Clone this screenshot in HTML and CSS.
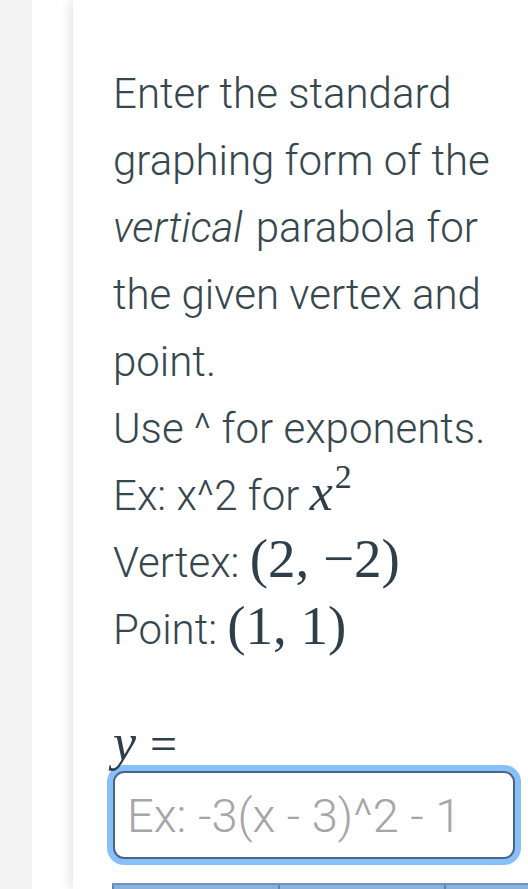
FILE: index.html
```html
<!DOCTYPE html>
<html lang="en">
<head>
<meta charset="utf-8">
<title>Parabola question</title>
<link rel="stylesheet" href="styles.css">
</head>
<body>
<div class="sheet">
  <div class="card">
    <div class="question">
      <p class="prompt">Enter the standard graphing form of the <em>vertical</em> parabola for the given vertex and point.</p>
      <p class="line">Use ^ for exponents.</p>
      <p class="line">Ex: x^2 for <span class="math"><i>x</i><sup>2</sup></span></p>
      <p class="line">Vertex: <span class="math big">(2, −2)</span></p>
      <p class="line">Point: <span class="math big">(1, 1)</span></p>
    </div>
    <div class="answer">
      <div class="label math"><i>y</i><span class="eq">=</span></div>
      <input class="field" type="text" placeholder="Ex: -3(x - 3)^2 - 1">
    </div>
    <div class="keys">
      <div class="key"></div>
      <div class="key"></div>
      <div class="key"></div>
    </div>
  </div>
</div>
</body>
</html>
```

FILE: styles.css
```css
html, body {
  margin: 0;
  padding: 0;
}
body {
  background: #f3f3f3;
  font-family: Roboto, "Liberation Sans", sans-serif;
  font-weight: 300;
  color: #37474f;
  overflow: hidden;
  height: 889px;
}
.sheet {
  margin-left: 32px;
  background: #ffffff;
  height: 100%;
}
.card {
  margin-left: 41px;
  height: 100%;
  background: #ffffff;
  box-shadow: -4px 0 10px rgba(0, 0, 0, 0.09);
  padding: 60px 0 0 40px;
  box-sizing: border-box;
  overflow: hidden;
}
.question {
  width: 401px;
  font-size: 42px;
  line-height: 67px;
}
.question p {
  margin: 0;
  height: 67px;
}
.prompt {
  height: auto !important;
}
.prompt em {
  font-style: italic;
  padding-right: 3px;
}
.math {
  font-family: "Liberation Serif", "DejaVu Serif", serif;
  font-weight: 400;
  color: #2f3f4a;
  line-height: 1;
}
.math i {
  font-style: italic;
  font-size: 52px;
}
.math sup {
  font-size: 34px;
  line-height: 0;
  vertical-align: 0;
  position: relative;
  top: -22px;
  margin-left: 2px;
}
.big {
  font-size: 55px;
  line-height: 0;
}
.answer {
  margin-top: 60px;
  width: 402px;
}
.label {
  height: 40px;
  line-height: 40px;
  font-size: 46px;
  margin-bottom: 8px;
  display: flex;
  align-items: baseline;
}
.label .eq {
  margin-left: 14px;
  font-size: 48px;
}
.field {
  display: block;
  width: 402px;
  height: 88px;
  box-sizing: border-box;
  border: 2px solid #4b6585;
  border-radius: 11px;
  box-shadow: 0 0 0 6px #87bffa;
  outline: none;
  padding: 0 0 0 12px;
  margin: 0;
  font-family: Roboto, "Liberation Sans", sans-serif;
  font-weight: 300;
  font-size: 47px;
  color: #37474f;
  background: #ffffff;
}
.field::placeholder {
  color: #a6a6a6;
  opacity: 1;
}
.keys {
  display: flex;
  margin-top: 24px;
  margin-left: -1px;
  height: 40px;
  border-top: 2px solid #6c93c4;
  overflow: hidden;
}
.key {
  flex: 0 0 166px;
  background: #8cafdb;
  border-left: 2px solid #5f86b7;
  box-sizing: border-box;
}
```
